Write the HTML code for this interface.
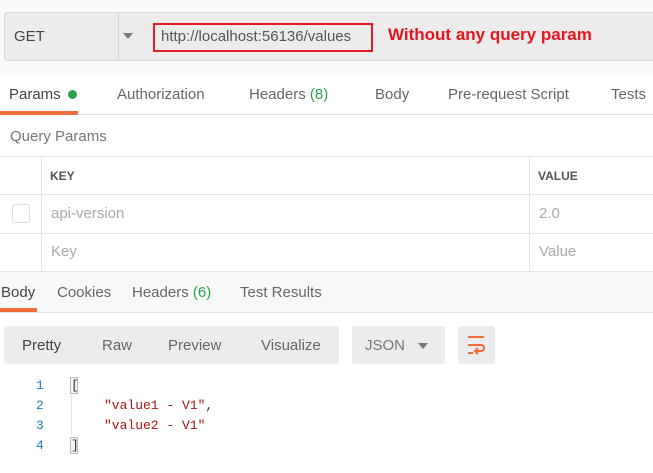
<!DOCTYPE html><html><head><style>
*{margin:0;padding:0;box-sizing:border-box}
body{width:653px;height:473px;overflow:hidden;background:#fff;font-family:"Liberation Sans",sans-serif;position:relative;color:#505050}
.a{position:absolute;white-space:nowrap}
</style></head><body>
<div class="a" style="left:0;top:0;width:653px;height:75px;background:#fafafa"></div>
<div class="a" style="left:4px;top:12px;width:660px;height:49px;background:#ececec;border:1px solid #d8d8d8;border-radius:3px"></div>
<div class="a" style="left:118px;top:13px;width:1px;height:47px;background:#d4d4d4"></div>
<div class="a" style="left:14px;top:28px;font-size:15px;color:#444">GET</div>
<div class="a" style="left:123px;top:33px;width:0;height:0;border-left:5px solid transparent;border-right:5px solid transparent;border-top:6px solid #777"></div>
<div class="a" style="left:153px;top:23px;width:220px;height:29px;border:2.5px solid #e21c25"></div>
<div class="a" style="left:161px;top:28px;font-size:15px;color:#555">http://localhost:56136/values</div>
<div class="a" style="left:388px;top:25px;font-size:17px;font-weight:bold;color:#e8141e">Without any query param</div>
<div class="a" style="left:0;top:114px;width:653px;height:1px;background:#e2e2e2"></div>
<div class="a" style="left:0;top:111px;width:78px;height:4px;background:#f26b3a"></div>
<div class="a" style="top:86px;left:9px;font-size:15px;color:#444">Params <span style="display:inline-block;width:9px;height:9px;border-radius:50%;background:#26a548;margin-left:3px"></span></div>
<div class="a" style="top:86px;left:117px;font-size:15px;color:#666">Authorization</div>
<div class="a" style="top:86px;left:249px;font-size:15px;color:#666">Headers <span style="color:#26a548">(8)</span></div>
<div class="a" style="top:86px;left:375px;font-size:15px;color:#666">Body</div>
<div class="a" style="top:86px;left:448px;font-size:15px;color:#666">Pre-request Script</div>
<div class="a" style="top:86px;left:611px;font-size:15px;color:#666">Tests</div>
<div class="a" style="top:128px;left:10px;font-size:15px;color:#777">Query Params</div>
<div class="a" style="left:0;top:156px;width:653px;height:1px;background:#e4e4e4"></div>
<div class="a" style="left:0;top:194px;width:653px;height:1px;background:#e4e4e4"></div>
<div class="a" style="left:0;top:233px;width:653px;height:1px;background:#e4e4e4"></div>
<div class="a" style="left:0;top:271px;width:653px;height:1px;background:#e4e4e4"></div>
<div class="a" style="left:41px;top:156px;width:1px;height:115px;background:#e4e4e4"></div>
<div class="a" style="left:529px;top:156px;width:1px;height:115px;background:#e4e4e4"></div>
<div class="a" style="top:169px;left:50px;font-size:12px;font-weight:bold;color:#555">KEY</div>
<div class="a" style="top:169px;left:538px;font-size:12px;font-weight:bold;color:#555">VALUE</div>
<div class="a" style="left:12px;top:204px;width:18px;height:19px;border:1px solid #ddd;border-radius:3px;background:#fff"></div>
<div class="a" style="top:205px;left:51px;font-size:15px;color:#aaa">api-version</div>
<div class="a" style="top:205px;left:539px;font-size:15px;color:#aaa">2.0</div>
<div class="a" style="top:243px;left:51px;font-size:15px;color:#aaa">Key</div>
<div class="a" style="top:243px;left:539px;font-size:15px;color:#aaa">Value</div>
<div class="a" style="left:0;top:272px;width:653px;height:41px;background:#f8f8f8;border-bottom:1px solid #e2e2e2"></div>
<div class="a" style="left:0;top:308px;width:37px;height:4px;background:#f26b3a"></div>
<div class="a" style="top:284px;left:1px;font-size:15px;color:#444">Body</div>
<div class="a" style="top:284px;left:57px;font-size:15px;color:#666">Cookies</div>
<div class="a" style="top:284px;left:132px;font-size:15px;color:#666">Headers <span style="color:#26a548">(6)</span></div>
<div class="a" style="top:284px;left:240px;font-size:15px;color:#666">Test Results</div>
<div class="a" style="left:4px;top:326px;width:335px;height:38px;background:#ececec;border-radius:3px"></div>
<div class="a" style="top:337px;left:22px;font-size:15px;color:#444">Pretty</div>
<div class="a" style="top:337px;left:102px;font-size:15px;color:#666">Raw</div>
<div class="a" style="top:337px;left:168px;font-size:15px;color:#666">Preview</div>
<div class="a" style="top:337px;left:261px;font-size:15px;color:#666">Visualize</div>
<div class="a" style="left:352px;top:326px;width:93px;height:38px;background:#ececec;border-radius:3px"></div>
<div class="a" style="top:337px;left:365px;font-size:15px;color:#777">JSON</div>
<div class="a" style="left:418px;top:343px;border-left:5px solid transparent;border-right:5px solid transparent;border-top:6px solid #777"></div>
<div class="a" style="left:458px;top:326px;width:37px;height:38px;background:#ececec;border-radius:3px"></div>
<svg class="a" style="left:466px;top:334px" width="22" height="22" viewBox="0 0 22 22" fill="none" stroke="#f26b3a" stroke-width="2"><path d="M2 3h16M2 11h13a3 3 0 0 1 0 6h-5M12 14l-3 3 3 3M2 19h5"/></svg>
<div style="font-family:'Liberation Mono',monospace;font-size:13px">
<div class="a" style="top:378px;left:36px;color:#1a7fb5">1</div>
<div class="a" style="top:398px;left:36px;color:#1a7fb5">2</div>
<div class="a" style="top:418px;left:36px;color:#1a7fb5">3</div>
<div class="a" style="top:438px;left:36px;color:#1a7fb5">4</div>
<div class="a" style="left:70px;top:377px;width:8px;height:17px;border:1px solid #bbb;background:#f4f4f4"></div>
<div class="a" style="top:378px;left:71px;color:#333">[</div>
<div class="a" style="left:70px;top:437px;width:8px;height:17px;border:1px solid #bbb;background:#f4f4f4"></div>
<div class="a" style="top:438px;left:71px;color:#333">]</div>
<div class="a" style="left:71px;top:395px;width:1px;height:40px;background:#e4e4e4"></div>
<div class="a" style="top:398px;left:104px;color:#a31515">"value1 - V1"<span style="color:#333">,</span></div>
<div class="a" style="top:418px;left:104px;color:#a31515">"value2 - V1"</div>
</div>
</body></html>
